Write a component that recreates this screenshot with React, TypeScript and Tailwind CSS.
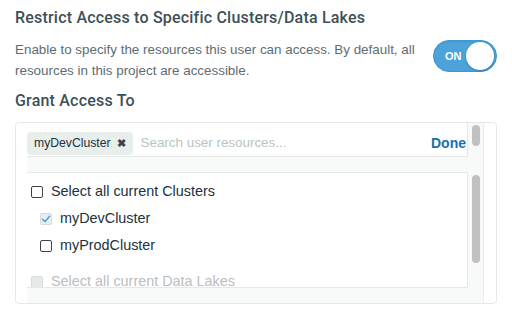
import React from "react";

const Check = ({ checked, disabled }: { checked?: boolean; disabled?: boolean }) => {
  if (checked) {
    return (
      <span className="w-[12px] h-[12px] rounded-[2px] bg-[#e9eeee] border border-[#d6dcdc] flex items-center justify-center">
        <svg width="10" height="10" viewBox="0 0 10 10">
          <path d="M1.5 5.2 L4 7.6 L8.6 2.2" fill="none" stroke="#3e9cd9" strokeWidth="1.4" strokeLinecap="round" strokeLinejoin="round" />
        </svg>
      </span>
    );
  }
  if (disabled) {
    return <span className="w-[12px] h-[12px] rounded-[2px] bg-[#e6e9e9] border border-[#d8dcdc]" />;
  }
  return <span className="w-[12px] h-[12px] rounded-[2px] bg-white border-[1.5px] border-[#3d4449]" />;
};

export default function App() {
  return (
    <div className="w-[512px] h-[316px] bg-white overflow-hidden" style={{ fontFamily: '"Liberation Sans", Arial, sans-serif' }}>
      <div className="pl-[15px] pr-[15px] pt-[9px]">
        <h1 className="text-[16px] leading-[18px] font-medium text-[#3d4f58] tracking-[0.2px]" style={{ fontFamily: "Roboto, sans-serif" }}>
          Restrict Access to Specific Clusters/Data Lakes
        </h1>
        <div className="flex items-start mt-[12px]">
          <p className="text-[13.4px] leading-[21px] text-[#5d6c74] w-[412px]">
            Enable to specify the resources this user can access. By default, all resources in this project are accessible.
          </p>
          <div className="ml-auto mt-[1px] w-[64px] h-[32px] rounded-full bg-[#4ba3d9] border border-[#3f97cd] flex items-center pl-[11px] pr-[2px] shadow-[inset_0_1px_2px_rgba(0,0,0,0.08)]">
            <span className="text-[11px] font-bold text-white leading-none">ON</span>
            <span className="ml-auto w-[28px] h-[28px] rounded-full bg-white shadow-[0_1px_2px_rgba(0,0,0,0.25)]" />
          </div>
        </div>
        <h2 className="mt-[11px] text-[16px] leading-[18px] font-medium text-[#3d4f58] tracking-[0.2px]" style={{ fontFamily: "Roboto, sans-serif" }}>
          Grant Access To
        </h2>
        <div className="mt-[12px] w-[482px] h-[182px] border border-[#e4e8e7] rounded-[4px] pl-[11px] pr-[12px] flex">
          <div className="flex-1 bg-[#f8f9f9] flex">
            <div className="w-[441px] flex flex-col">
              <div className="h-[34px] bg-white border-b border-r border-[#e6e8e8] flex items-end pb-[1px] pr-[1px]">
                <div className="h-[23px] px-[7px] rounded-[4px] bg-[#e7eeec] flex items-center gap-[6px]">
                  <span className="text-[12.2px] text-[#21313c]">myDevCluster</span>
                  <span className="text-[11px] text-[#3d4449] font-bold leading-none">✖</span>
                </div>
                <span className="ml-[8px] h-[23px] flex items-center text-[13.4px] text-[#b8c4c2]">Search user resources...</span>
                <span className="ml-auto h-[23px] flex items-center text-[14px] font-bold text-[#1a70aa]">Done</span>
              </div>
              <div className="h-[15px]" />
              <div className="h-[116px] bg-white border-t border-b border-r border-[#e6e8e8] overflow-hidden">
                <div className="flex items-center gap-[8px] pl-[4px] mt-[12px] h-[14px]">
                  <Check />
                  <span className="text-[14.4px] text-[#21313c]">Select all current Clusters</span>
                </div>
                <div className="flex items-center gap-[8px] pl-[13px] mt-[13px] h-[14px]">
                  <Check checked />
                  <span className="text-[14.4px] text-[#21313c]">myDevCluster</span>
                </div>
                <div className="flex items-center gap-[8px] pl-[13px] mt-[13px] h-[14px]">
                  <Check />
                  <span className="text-[14.4px] text-[#21313c]">myProdCluster</span>
                </div>
                <div className="flex items-center gap-[8px] pl-[4px] mt-[22px] h-[14px]">
                  <Check disabled />
                  <span className="text-[14.4px] text-[#b9bebf]">Select all current Data Lakes</span>
                </div>
              </div>
            </div>
            <div className="flex-1 flex flex-col items-center border-r border-[#eceeee]">
              <div className="mt-[2px] w-[8px] h-[21px] rounded-full bg-[#c1c1c1]" />
              <div className="mt-[29px] w-[8px] h-[88px] rounded-full bg-[#c1c1c1]" />
            </div>
          </div>
        </div>
      </div>
    </div>
  );
}
